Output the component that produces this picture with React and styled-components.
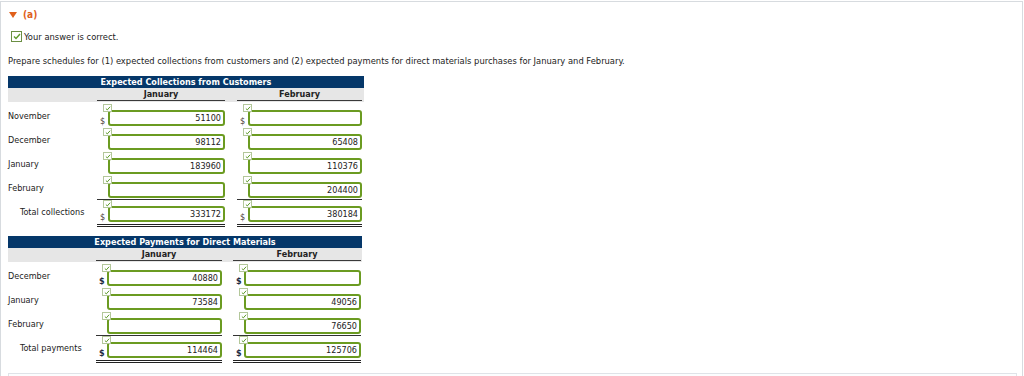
import { createGlobalStyle, styled } from "styled-components";

const GlobalStyle = createGlobalStyle`
  body {
    margin: 0;
    background: #fff;
    font-family: "DejaVu Sans Condensed", "DejaVu Sans", sans-serif;
    color: #222;
  }
`;

const Panel = styled.div`
  margin-top: 1px;
  width: 1023px;
  height: 375px;
  box-sizing: border-box;
  border: 1px solid #d7dbdf;
  border-bottom: none;
  padding: 7px 5px 0 7px;
  overflow: hidden;
`;

const PartHead = styled.div`
  display: flex;
  align-items: center;
  gap: 6px;
  padding-left: 1px;
  color: #e0601b;
  font-size: 10px;
  font-weight: bold;
  line-height: 12px;
`;

const Feedback = styled.div`
  display: flex;
  align-items: center;
  gap: 2px;
  margin-top: 10px;
  padding-left: 3px;
  font-size: 9.3px;
  line-height: 11px;
`;

const CheckBox = styled.span`
  display: inline-flex;
  align-items: center;
  justify-content: center;
  width: 11px;
  height: 11px;
  box-sizing: border-box;
  border: 1px solid #6b8f43;
  background: #fff;
`;

const Prompt = styled.p`
  margin: 13px 0 0;
  font-size: 9.3px;
  line-height: 11px;
`;

const Table = styled.div`
  width: ${(p) => p.$width}px;
  margin-top: ${(p) => p.$top}px;
`;

const TitleBar = styled.div`
  background: #053769;
  color: #fff;
  text-align: center;
  font-size: 9px;
  font-weight: bold;
  line-height: 12px;
`;

const Grid = styled.div`
  display: grid;
  grid-template-columns: ${(p) => p.$cols};
  column-gap: ${(p) => p.$gap}px;
`;

const HeadRow = styled(Grid)`
  background: #e6e6e6;
  padding-bottom: 1px;
`;

const HeadCell = styled.div`
  text-align: center;
  font-size: 9px;
  font-weight: bold;
  line-height: 12px;
  border-bottom: 1px solid #3a3a3a;
`;

const Body = styled.div`
  padding-top: 2px;
`;

const Label = styled.div`
  display: flex;
  align-items: center;
  padding-left: ${(p) => (p.$total ? 12 : 0)}px;
  padding-bottom: ${(p) => (p.$total ? 3 : 0)}px;
  font-size: 9px;
  white-space: nowrap;
  color: #222;
`;

const ValueCell = styled.div`
  display: flex;
  align-items: flex-end;
  padding: 6px 0 ${(p) => (p.$rule === "single" ? 1 : 2)}px 3px;
  border-bottom: ${(p) =>
    p.$rule === "double"
      ? "3px double #222"
      : p.$rule === "single"
      ? "1px solid #333"
      : "none"};
`;

const Dollar = styled.span`
  width: 8px;
  flex: none;
  font-size: 9px;
  line-height: 9px;
  font-weight: ${(p) => (p.$bold ? "bold" : "normal")};
  color: ${(p) => (p.$bold ? "#1d2a44" : "#4a4036")};
`;

const InputBox = styled.div`
  position: relative;
  flex: 1;
  height: 16px;
  box-sizing: border-box;
  border: 2px solid #6b9b21;
  border-radius: 3px;
  background: #fff;
  padding-right: 2px;
  text-align: right;
  font-size: 9px;
  line-height: 12px;
  color: #222;
`;

const MiniCheck = styled.span`
  position: absolute;
  top: -8px;
  left: -7px;
  width: 9px;
  height: 8px;
  box-sizing: border-box;
  border: 1px solid #b3c79a;
  background: #fff;
  display: flex;
  align-items: center;
  justify-content: center;
`;

const BottomBox = styled.div`
  margin-top: 10px;
  height: 30px;
  border: 1px solid #dfe3e8;
  background: #fcfdfe;
`;

const Tick = ({ size = 7 }) => (
  <svg width={size} height={size - 1} viewBox="0 0 8 7">
    <polyline
      points="1,3.5 3,5.5 7,1"
      fill="none"
      stroke="#5e9a2a"
      strokeWidth="1.4"
    />
  </svg>
);

const collections = {
  title: "Expected Collections from Customers",
  width: 356,
  top: 10,
  cols: "77px 128px 125px",
  gap: 12,
  totalLabel: "Total collections",
  rows: [
    { label: "November", jan: "51100", feb: "", dollar: true },
    { label: "December", jan: "98112", feb: "65408" },
    { label: "January", jan: "183960", feb: "110376" },
    { label: "February", jan: "", feb: "204400", rule: "single" },
  ],
  total: { jan: "333172", feb: "380184" },
};

const payments = {
  title: "Expected Payments for Direct Materials",
  width: 354,
  top: 9,
  cols: "77px 126px 128px",
  gap: 11,
  totalLabel: "Total payments",
  boldDollar: true,
  rows: [
    { label: "December", jan: "40880", feb: "", dollar: true },
    { label: "January", jan: "73584", feb: "49056" },
    { label: "February", jan: "", feb: "76650", rule: "single" },
  ],
  total: { jan: "114464", feb: "125706" },
};

function Value({ value, dollar, rule, boldDollar }) {
  return (
    <ValueCell $rule={rule}>
      <Dollar $bold={boldDollar}>{dollar ? "$" : ""}</Dollar>
      <InputBox>
        <MiniCheck>
          <Tick size={6} />
        </MiniCheck>
        {value}
      </InputBox>
    </ValueCell>
  );
}

function Schedule({ data }) {
  return (
    <Table $width={data.width} $top={data.top}>
      <TitleBar>{data.title}</TitleBar>
      <HeadRow $cols={data.cols} $gap={data.gap}>
        <div />
        <HeadCell>January</HeadCell>
        <HeadCell>February</HeadCell>
      </HeadRow>
      <Body>
        {data.rows.map((r) => (
          <Grid key={r.label} $cols={data.cols} $gap={data.gap}>
            <Label>{r.label}</Label>
            <Value value={r.jan} dollar={r.dollar} rule={r.rule} boldDollar={data.boldDollar} />
            <Value value={r.feb} dollar={r.dollar} rule={r.rule} boldDollar={data.boldDollar} />
          </Grid>
        ))}
        <Grid $cols={data.cols} $gap={data.gap}>
          <Label $total>{data.totalLabel}</Label>
          <Value value={data.total.jan} dollar rule="double" boldDollar={data.boldDollar} />
          <Value value={data.total.feb} dollar rule="double" boldDollar={data.boldDollar} />
        </Grid>
      </Body>
    </Table>
  );
}

export default function App() {
  return (
    <>
      <GlobalStyle />
      <Panel>
        <PartHead>
          <svg width="8" height="6" viewBox="0 0 8 6">
            <polygon points="0,0 8,0 4,6" fill="#e0601b" />
          </svg>
          <span>(a)</span>
        </PartHead>
        <Feedback>
          <CheckBox>
            <Tick size={8} />
          </CheckBox>
          <span>Your answer is correct.</span>
        </Feedback>
        <Prompt>
          Prepare schedules for (1) expected collections from customers and (2)
          expected payments for direct materials purchases for January and
          February.
        </Prompt>
        <Schedule data={collections} />
        <Schedule data={payments} />
        <BottomBox />
      </Panel>
    </>
  );
}
